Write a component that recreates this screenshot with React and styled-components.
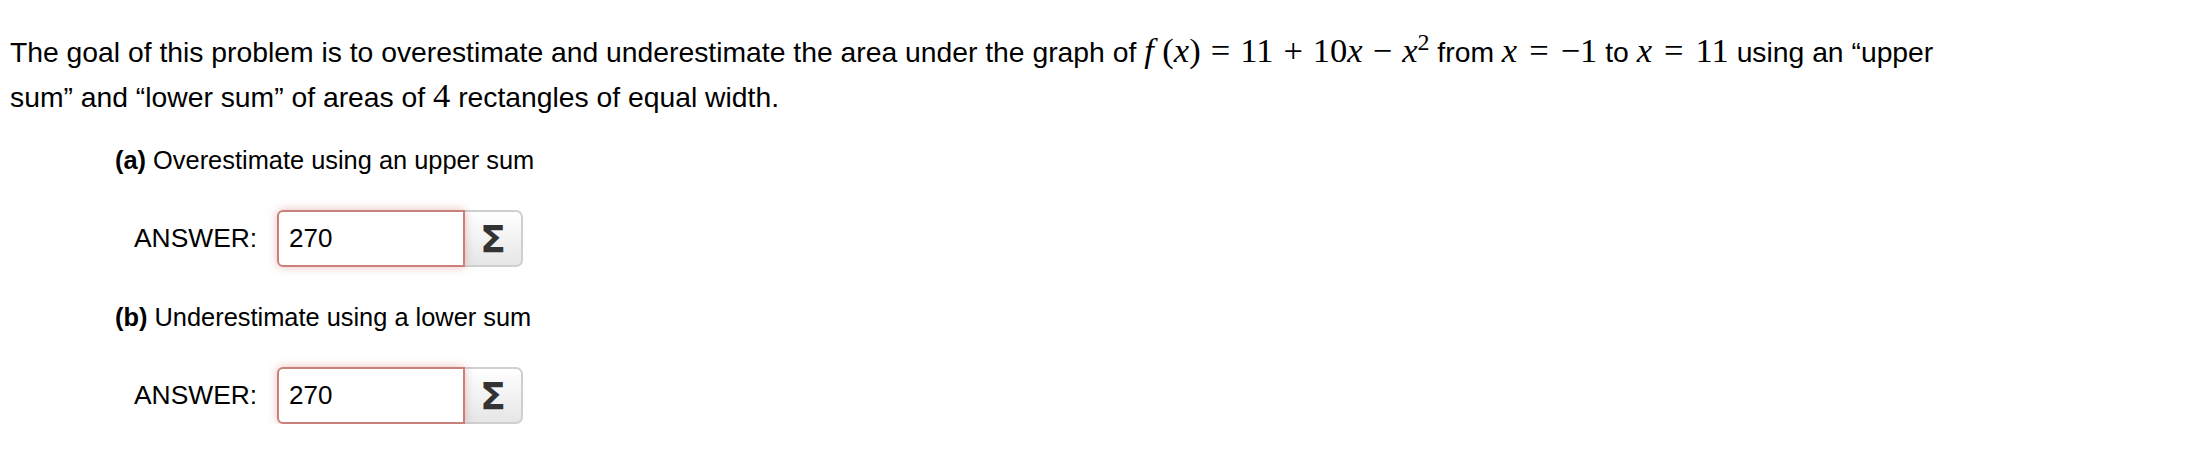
import React from "react";
import styled, { createGlobalStyle } from "styled-components";

const Global = createGlobalStyle`
  html, body { margin: 0; padding: 0; background: #fff; }
  body { font-family: "Liberation Sans", Arial, Helvetica, sans-serif; color: #000; }
`;

const Page = styled.div`
  padding: 29px 8px 0 10px;
  width: 2184px;
`;

const Problem = styled.p`
  margin: 0;
  font-size: 28.3px;
  line-height: 43px;
  max-width: 1960px;
`;

const Math = styled.span`
  font-family: "Liberation Serif", "Times New Roman", serif;
  font-size: 34.5px;
  white-space: nowrap;
`;

const V = styled.i`
  font-style: italic;
  font-family: "Liberation Serif", "Times New Roman", serif;
`;

const Sup = styled.sup`
  font-size: 24px;
  line-height: 0;
  vertical-align: 0.5em;
`;

const Op = styled.span`
  padding: 0 ${(p) => p.$pad || 10}px;
`;

const Part = styled.section`
  padding-left: 105px;
  margin-top: ${(p) => p.$top}px;
`;

const PartTitle = styled.div`
  font-size: 25.4px;
  line-height: 30px;
  b { font-weight: bold; }
`;

const AnswerRow = styled.div`
  display: flex;
  align-items: center;
  margin-top: 35px;
  padding-left: 19px;
`;

const Label = styled.span`
  font-size: 26.4px;
  width: 143px;
`;

const InputGroup = styled.div`
  display: flex;
  align-items: stretch;
  height: 57px;
`;

const Input = styled.input`
  box-sizing: border-box;
  width: 188px;
  height: 57px;
  border: 2px solid #c9807b;
  border-radius: 6px 0 0 6px;
  box-shadow: 0 0 10px rgba(205, 110, 105, 0.45);
  padding: 0 0 0 10px;
  font-family: "Liberation Sans", Arial, sans-serif;
  font-size: 26px;
  color: #000;
  outline: none;
  position: relative;
  z-index: 1;
`;

const SigmaButton = styled.button`
  box-sizing: border-box;
  width: 58px;
  height: 57px;
  border: 2px solid #cfcfcf;
  border-left: none;
  border-radius: 0 7px 7px 0;
  background: linear-gradient(#ffffff, #e6e6e6);
  display: flex;
  align-items: center;
  justify-content: center;
  padding: 0;
  cursor: pointer;
`;

const Sigma = styled.span`
  font-family: "DejaVu Sans", "Liberation Sans", sans-serif;
  font-weight: bold;
  font-size: 38px;
  color: #333;
  line-height: 1;
`;

function Answer() {
  return (
    <AnswerRow>
      <Label>ANSWER:</Label>
      <InputGroup>
        <Input defaultValue="270" />
        <SigmaButton type="button" aria-label="sum">
          <Sigma>Σ</Sigma>
        </SigmaButton>
      </InputGroup>
    </AnswerRow>
  );
}

export default function App() {
  return (
    <>
      <Global />
      <Page>
        <Problem>
          The goal of this problem is to overestimate and underestimate the area under the graph of{" "}
          <Math>
            <V>f</V> (<V>x</V>)<Op>=</Op>11<Op>+</Op>10<V>x</V>
            <Op>−</Op>
            <V>x</V>
            <Sup>2</Sup>
          </Math>{" "}
          from{" "}
          <Math>
            <V>x</V>
            <Op $pad={12}>=</Op>−1
          </Math>{" "}
          to{" "}
          <Math>
            <V>x</V>
            <Op $pad={12}>=</Op>11
          </Math>{" "}
          using an “upper sum” and “lower sum” of areas of <Math>4</Math> rectangles of equal width.
        </Problem>
        <Part $top={26}>
          <PartTitle>
            <b>(a)</b> Overestimate using an upper sum
          </PartTitle>
          <Answer />
        </Part>
        <Part $top={35}>
          <PartTitle>
            <b>(b)</b> Underestimate using a lower sum
          </PartTitle>
          <Answer />
        </Part>
      </Page>
    </>
  );
}
